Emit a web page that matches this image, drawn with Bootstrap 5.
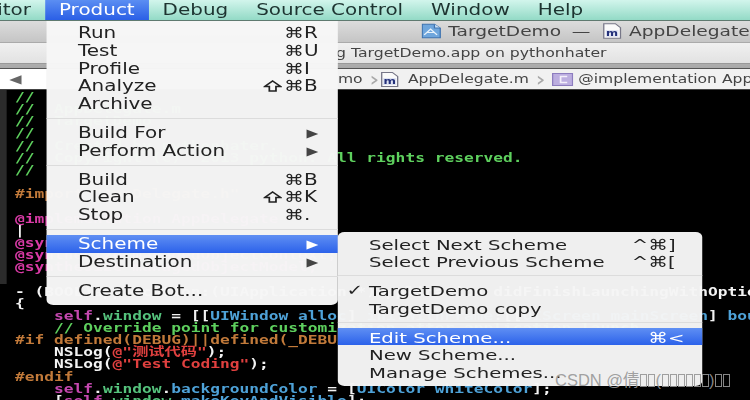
<!DOCTYPE html>
<html lang="en">
<head>
<meta charset="utf-8">
<title>Xcode Product menu</title>
<link rel="stylesheet" href="https://cdn.jsdelivr.net/npm/bootstrap@5.3.0/dist/css/bootstrap.min.css">
<style>
html,body{margin:0;width:750px;height:400px;overflow:hidden;background:#000}
.xc-stage{width:564px;height:400px;transform:scaleX(1.33);transform-origin:0 0;filter:blur(.45px);font-family:"DejaVu Sans",sans-serif;font-size:15px;color:#222;overflow:hidden}
.xc-menubar{height:21px;line-height:21px;background:linear-gradient(#d2f5ec,#93dac6);border-bottom:1px solid #5f7a70;color:#1d3330;margin-left:-12.6px;white-space:nowrap}
.xc-mitem{padding:0 10.5px}
.xc-mactive{background:linear-gradient(#5b8ef2,#2a5fe6);color:#fff}
.xc-toolbar{height:49px;background:linear-gradient(#dcdcdc,#a9a9a9);border-bottom:1px solid #555}
.xc-title{height:20px;line-height:20px;font-size:14px;color:#444;padding-left:317px;white-space:nowrap}
.xc-title svg{flex:none}
.xc-tname{margin-left:5.5px}
.xc-dash{margin:0 9.500px 0 8px}
.xc-appname{margin-left:5px}
.xc-activity{margin-top:1px;height:22px;line-height:21px;background:linear-gradient(#f0f0f0,#e2e2e2);border-top:1px solid #aaa;border-bottom:1px solid #999;font-size:11.8px;color:#444;padding-left:252.6px;white-space:pre}
.xc-crumbs{height:21px;line-height:20px;background:#f1f1f1;border-bottom:1px solid #444;font-size:11.7px;color:#444;white-space:pre}
.xc-crumbs>*{flex:none}
.xc-back{width:34.6px;padding-left:7px;color:#666;font-size:12px;background:#fff}
.xc-mo{margin-left:219.5px}
.xc-sep{color:#a8a8a8;font-size:19px;line-height:18px;margin:0 1px 0 5px}
.xc-sep-wide{margin-right:4.5px}
.xc-cname{margin-left:2.5px}
.xc-editor{height:310px;background:#000}
.xc-gutter{width:4.5px;height:194px;background:#2b2b2b;flex:none}
.xc-code{font-family:"DejaVu Sans Mono","Noto Sans CJK SC",monospace;font-weight:700;font-size:12.2px;line-height:12.15px;margin:1px 0 0 6.8px;padding:0;color:#f2f2f2;white-space:pre;overflow:visible;background:none}
.c-com{color:#5ed05e}.c-pre{color:#c27a3a}.c-at{color:#d93aa6}.c-self{color:#c548b0}.c-prop{color:#55c27c}.c-cls{color:#4ea2d8}.c-str{color:#e0403f}
.xc-menu{top:21px;left:34.6px;width:219.5px;padding:3px 0 5.2px;background:rgba(246,246,246,.985);border-radius:0 0 5px 5px;color:#222}
.xc-sub{top:232px;left:254.1px;width:273.7px;padding:2.5px 0 4.900px;border-radius:5px;background:rgba(245,245,245,.975);color:#222;font-size:14.8px}
.xc-row{height:17.8px;line-height:19.8px;padding-left:24px;white-space:nowrap}
.xc-sub .xc-row{padding-left:23.3px}
.xc-mods{text-align:right;margin-left:auto}
.xc-mods svg{margin-right:2px;vertical-align:-1px}
.xc-key{width:15px;margin-right:10.6px;flex:none}
.xc-arrow{font-size:11.500px;color:#444;padding-left:2px}
.xc-hl{background:linear-gradient(#5f8ff3,#2c62ea);color:#fff}
.xc-hl .xc-arrow{color:#fff}
.xc-div{height:11px;display:flex;align-items:center}
.xc-div::before{content:"";display:block;width:100%;height:1px;background:#dcdcdc}
.xc-check{left:6.5px;font-size:15px;font-weight:700}
.xc-mark{top:368px;left:555px;font-family:"Liberation Sans","Noto Sans CJK SC",sans-serif;font-size:16.5px;line-height:24px;color:rgba(150,150,150,.9);white-space:nowrap}
.xc-tofu{display:inline-block;width:7px;height:13px;border:1px solid rgba(150,150,150,.9);margin:0 .5px;flex:none}
</style>
</head>
<body>
<div class="xc-stage d-flex flex-column position-relative">
  <nav class="xc-menubar d-flex">
    <span class="xc-mitem">itor</span>
    <span class="xc-mitem xc-mactive">Product</span>
    <span class="xc-mitem">Debug</span>
    <span class="xc-mitem">Source Control</span>
    <span class="xc-mitem">Window</span>
    <span class="xc-mitem">Help</span>
  </nav>
  <div class="xc-toolbar">
    <div class="xc-title d-flex align-items-center">
      <svg width="14.5" height="16" viewBox="0 0 15 16"><path d="M.5 1H10L14.500 5V15H.5Z" fill="#6fa6dc" stroke="#3f74b0"/><path d="M10 1V5H14.500" fill="#cfe2f5" stroke="#3f74b0"/><path d="M2 12L7 6L12 12M4 9.500H10" fill="none" stroke="#e8f2fb" stroke-width="1.100"/></svg>
      <span class="xc-tname">TargetDemo</span>
      <span class="xc-dash">—</span>
      <svg width="14.500" height="16" viewBox="0 0 15 16"><path d="M1 .5H10L14 4.500V15.500H1Z" fill="#fafafa" stroke="#778"/><rect x="2.500" y="7" width="10" height="7" fill="#dfe3f2"/><text x="7.500" y="13.500" font-size="9" font-weight="700" text-anchor="middle" fill="#23307a" font-family="DejaVu Sans">m</text></svg>
      <span class="xc-appname">AppDelegate.m</span>
    </div>
    <div class="xc-activity">g TargetDemo.app on pythonhater</div>
  </div>
  <div class="xc-crumbs d-flex align-items-center">
    <span class="xc-back">◀</span>
    <span class="xc-mo">mo</span><span class="xc-sep">›</span>
    <svg width="14" height="15" viewBox="0 0 14 15" class="me-1"><path d="M1 .5H9L13 4.500V14.500H1Z" fill="#fafafa" stroke="#778"/><rect x="2" y="6" width="10" height="7" fill="#dfe3f2"/><text x="7" y="12.500" font-size="9" font-weight="700" text-anchor="middle" fill="#23307a" font-family="DejaVu Sans">m</text></svg>
    <span class="xc-cname">AppDelegate.m</span><span class="xc-sep xc-sep-wide">›</span>
    <svg width="16" height="13" viewBox="0 0 16 13" class="me-1"><rect x=".5" y=".5" width="15" height="12" fill="#bcaee0" stroke="#8d7dbf"/><path d="M11.500 3.500H6.500V9.500H11.500" fill="none" stroke="#f3effa" stroke-width="1.300"/></svg>
    <span>@implementation AppDelegate</span>
  </div>
  <div class="xc-editor d-flex">
    <div class="xc-gutter"></div>
<pre class="xc-code"><span class="c-com">//
//  AppDelegate.m
//  TargetDemo
//
//  Created by pythonhater.
//  Copyright (c)  2013 python. All rights reserved.
//</span>

<span class="c-pre">#import "AppDelegate.h"</span>

<span class="c-at">@implementation AppDelegate</span>
|
<span class="c-at">@synthesize window;</span>
<span class="c-at">@synthesize managedObjectContext;</span>
<span class="c-at">@synthesize managedObjectModel;</span>

- (BOOL)application:(UIApplication *)application didFinishLaunchingWithOptions:(NSDictionary *)launchOptions
{
    <span class="c-self">self</span>.<span class="c-prop">window</span> = [[<span class="c-cls">UIWindow</span> <span class="c-cls">alloc</span>] <span class="c-cls">initWithFrame</span>:[[<span class="c-cls">UIScreen mainScreen</span>] <span class="c-cls">bounds</span>]];
    <span class="c-com">// Override point for customization after application launch.</span>
<span class="c-pre">#if defined(DEBUG)||defined(_DEBUG)</span>
    NSLog(<span class="c-str">@"测试代码"</span>);
    NSLog(<span class="c-str">@"Test Coding"</span>);
<span class="c-pre">#endif</span>
    <span class="c-self">self</span>.<span class="c-prop">window</span>.<span class="c-cls">backgroundColor</span> = [<span class="c-cls">UIColor whiteColor</span>];
    [<span class="c-self">self</span>.<span class="c-prop">window</span> <span class="c-cls">makeKeyAndVisible</span>];</pre>
  </div>

  <div class="xc-menu position-absolute">
    <div class="xc-row d-flex"><span>Run</span><span class="xc-mods">⌘</span><span class="xc-key">R</span></div>
    <div class="xc-row d-flex"><span>Test</span><span class="xc-mods">⌘</span><span class="xc-key">U</span></div>
    <div class="xc-row d-flex"><span>Profile</span><span class="xc-mods">⌘</span><span class="xc-key">I</span></div>
    <div class="xc-row d-flex"><span>Analyze</span><span class="xc-mods"><svg width="14" height="12" viewBox="0 0 14 12"><path d="M7 1L13 6.500H9.500V11H4.500V6.500H1Z" fill="none" stroke="#222" stroke-width="1.300"/></svg>⌘</span><span class="xc-key">B</span></div>
    <div class="xc-row d-flex"><span>Archive</span></div>
    <div class="xc-div"></div>
    <div class="xc-row d-flex"><span>Build For</span><span class="xc-mods"></span><span class="xc-key xc-arrow">▶</span></div>
    <div class="xc-row d-flex"><span>Perform Action</span><span class="xc-mods"></span><span class="xc-key xc-arrow">▶</span></div>
    <div class="xc-div"></div>
    <div class="xc-row d-flex"><span>Build</span><span class="xc-mods">⌘</span><span class="xc-key">B</span></div>
    <div class="xc-row d-flex"><span>Clean</span><span class="xc-mods"><svg width="14" height="12" viewBox="0 0 14 12"><path d="M7 1L13 6.500H9.500V11H4.500V6.500H1Z" fill="none" stroke="#222" stroke-width="1.300"/></svg>⌘</span><span class="xc-key">K</span></div>
    <div class="xc-row d-flex"><span>Stop</span><span class="xc-mods">⌘</span><span class="xc-key">.</span></div>
    <div class="xc-div"></div>
    <div class="xc-row d-flex xc-hl"><span>Scheme</span><span class="xc-mods"></span><span class="xc-key xc-arrow">▶</span></div>
    <div class="xc-row d-flex"><span>Destination</span><span class="xc-mods"></span><span class="xc-key xc-arrow">▶</span></div>
    <div class="xc-div"></div>
    <div class="xc-row d-flex"><span>Create Bot...</span></div>
  </div>

  <div class="xc-sub position-absolute">
    <div class="xc-row d-flex"><span>Select Next Scheme</span><span class="xc-mods">^⌘</span><span class="xc-key">]</span></div>
    <div class="xc-row d-flex"><span>Select Previous Scheme</span><span class="xc-mods">^⌘</span><span class="xc-key">[</span></div>
    <div class="xc-div"></div>
    <div class="xc-row d-flex position-relative"><span class="xc-check position-absolute">✓</span><span>TargetDemo</span></div>
    <div class="xc-row d-flex"><span>TargetDemo copy</span></div>
    <div class="xc-div"></div>
    <div class="xc-row d-flex xc-hl"><span>Edit Scheme...</span><span class="xc-mods">⌘</span><span class="xc-key">&lt;</span></div>
    <div class="xc-row d-flex"><span>New Scheme...</span></div>
    <div class="xc-row d-flex"><span>Manage Schemes...</span></div>
  </div>
</div>
<div class="xc-mark position-absolute d-flex align-items-center">CSDN @倩<span class="xc-tofu"></span><span class="xc-tofu"></span>(<span class="xc-tofu"></span><span class="xc-tofu"></span><span class="xc-tofu"></span><span class="xc-tofu"></span><span class="xc-tofu"></span><span class="xc-tofu"></span>)<span class="xc-tofu"></span><span class="xc-tofu"></span></div>
<script src="https://cdn.jsdelivr.net/npm/bootstrap@5.3.0/dist/js/bootstrap.bundle.min.js"></script>
</body>
</html>
